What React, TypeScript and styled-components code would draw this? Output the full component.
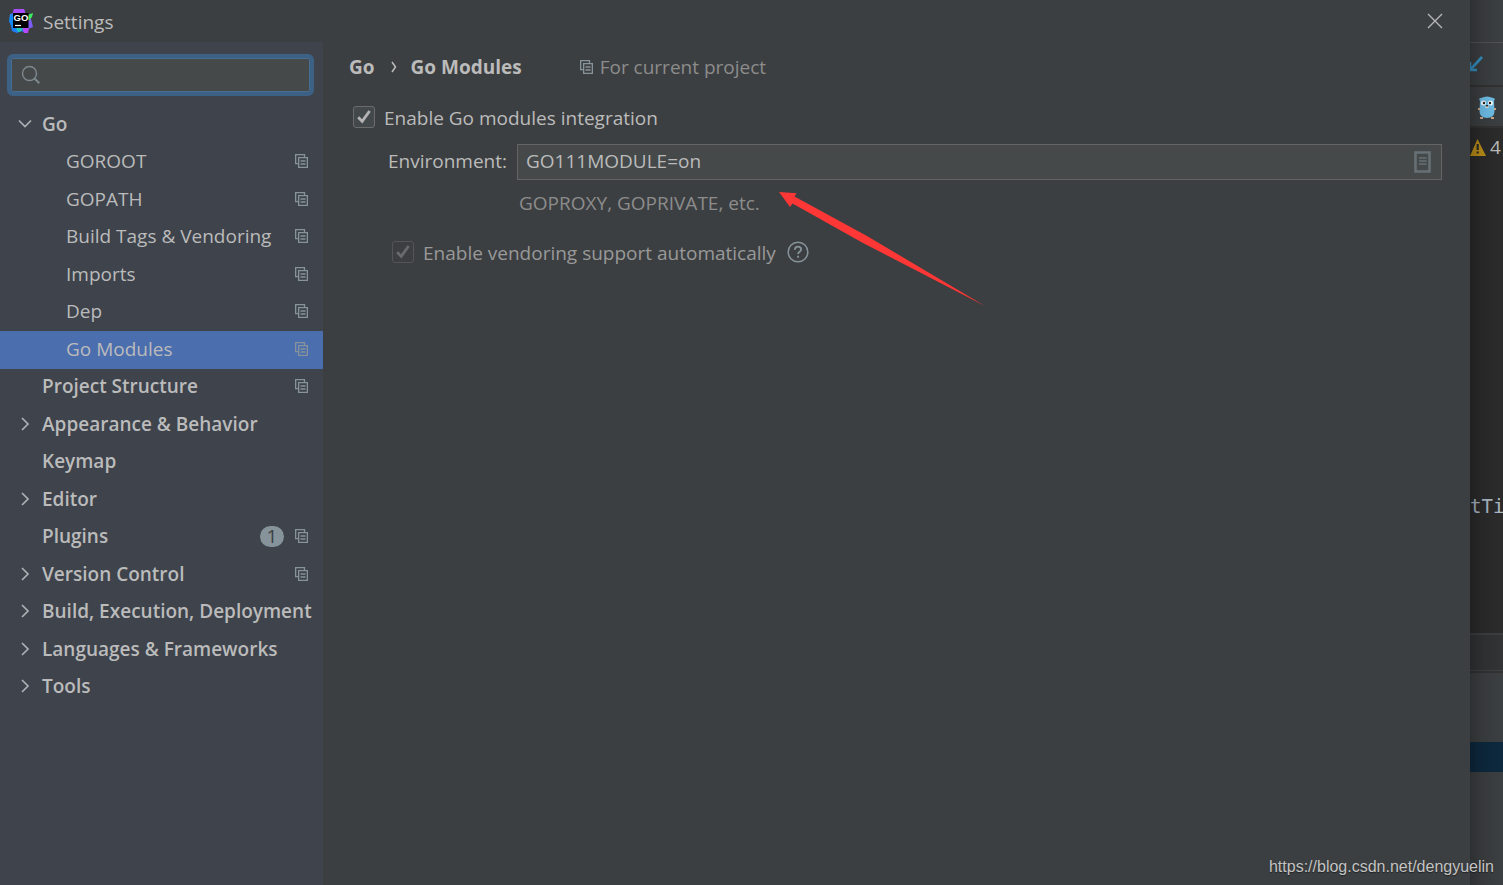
import React from 'react';
import styled, { createGlobalStyle, css } from 'styled-components';

const GlobalStyle = createGlobalStyle`
  * { box-sizing: border-box; }
  body {
    margin: 0;
    background: #3c3f41;
    color: #bbbbbb;
    font-family: "Open Sans", "Noto Sans", sans-serif;
    font-size: 19px;
    font-weight: 400;
    line-height: 26px;
  }
  input, button { font: inherit; color: inherit; }
`;

const Screen = styled.div`
  position: relative;
  display: flex;
  min-height: 100vh;
  overflow: hidden;
`;

const Dialog = styled.div`
  flex: 1;
  min-width: 0;
  display: flex;
  flex-direction: column;
  background: #3c3f41;
`;

const TitleBar = styled.header`
  display: flex;
  align-items: center;
  height: 42px;
  padding: 0 24px 0 8px;
  gap: 9px;
`;

const Title = styled.h1`
  flex: 1;
  margin: 0;
  padding-top: 1px;
  font-size: 19px;
  font-weight: inherit;
`;

const IconButton = styled.button`
  display: grid;
  place-items: center;
  flex: none;
  padding: 0;
  border: 0;
  background: none;
  cursor: pointer;
`;

const Body = styled.div`
  flex: 1;
  display: flex;
`;

const Sidebar = styled.aside`
  width: 323px;
  flex: none;
  padding-top: 12px;
  background: #3e434c;
`;

const SearchBox = styled.label`
  display: flex;
  align-items: center;
  gap: 8px;
  height: 42px;
  margin: 0 9px 10px 7px;
  padding: 0 10px;
  border: 4px solid #3d6185;
  border-radius: 6px;
  background: #45494a;
  box-shadow: inset 0 0 0 1px #466d94;
`;

const SearchInput = styled.input`
  flex: 1;
  min-width: 0;
  padding: 0 0 2px;
  border: 0;
  outline: 0;
  background: none;
`;

const Tree = styled.ul`
  display: grid;
  grid-template-columns: minmax(0, 1fr);
  grid-auto-rows: 1fr;
  min-height: 600px;
  margin: 0;
  padding: 0;
  list-style: none;
`;

const TreeRow = styled.li<{ $selected?: boolean }>`
  display: flex;
  align-items: center;
  padding: 0 14px 2px 18px;
  ${(p) => p.$selected && css`background: #4b6eaf;`}
`;

const Twisty = styled.span`
  display: grid;
  place-items: center;
  flex: none;
  width: 14px;
  margin-right: 10px;
`;

const TreeLink = styled.a<{ $child?: boolean }>`
  flex: 1;
  min-width: 0;
  color: inherit;
  text-decoration: none;
  white-space: nowrap;
  font-weight: ${(p) => (p.$child ? 400 : 600)};
  padding-left: ${(p) => (p.$child ? 24 : 0)}px;
`;

const CountBadge = styled.span`
  width: 24px;
  height: 21px;
  margin-right: 11px;
  border-radius: 11px;
  background: #87939a;
  color: #3c3f41;
  text-align: center;
  line-height: 21px;
`;

const Content = styled.main`
  position: relative;
  flex: 1;
  min-width: 0;
  padding: 12px 28px 0 26px;
`;

const Crumbs = styled.nav`
  display: flex;
  align-items: center;
  height: 26px;
`;

const CrumbLink = styled.a`
  color: inherit;
  font-weight: 700;
  text-decoration: none;
`;

const CrumbArrow = styled.svg`
  margin: 0 14px 0 16px;
`;

const Scope = styled.span`
  display: flex;
  align-items: center;
  gap: 6px;
  margin-left: 58px;
  color: #8c8c8c;
`;

const CheckRow = styled.div<{ $nested?: boolean }>`
  display: flex;
  align-items: center;
  gap: 9px;
  margin: ${(p) => (p.$nested ? '24px 0 0 43px' : '25px 0 0 4px')};
  color: ${(p) => (p.$nested ? '#999999' : 'inherit')};
`;

const CheckFrame = styled.span`
  display: grid;
  width: 22px;
  height: 22px;
  margin-bottom: 3px;
  & > * { grid-area: 1 / 1; }
`;

const CheckInput = styled.input`
  appearance: none;
  margin: 0;
  border: 1px solid #6b6b6b;
  border-radius: 3px;
  background: #43494a;
  &:disabled { border-color: #545556; background: #3c3f41; }
`;

const CheckMark = styled.svg`
  pointer-events: none;
  place-self: center;
`;

const HelpButton = styled(IconButton)`
  margin: 0 0 2px 2px;
`;

const Field = styled.div`
  display: grid;
  grid-template-columns: 113px 1fr;
  column-gap: 16px;
  align-items: center;
  margin: 13px 0 0 39px;
`;

const FieldLabel = styled.label`
  padding-bottom: 2px;
  white-space: nowrap;
`;

const FieldBox = styled.div`
  display: flex;
  align-items: center;
  height: 36px;
  padding: 0 10px 0 8px;
  border: 1px solid #646464;
  background: #45494a;
`;

const Hint = styled.p`
  grid-column: 2;
  margin: 10px 0 0 2px;
  color: #8c8c8c;
`;

const Annotation = styled.svg`
  position: absolute;
  left: 456px;
  top: 150px;
  pointer-events: none;
`;

const Behind = styled.aside`
  position: relative;
  display: flex;
  flex-direction: column;
  width: 33px;
  flex: none;
  overflow: hidden;
  &::after {
    content: "";
    position: absolute;
    inset: 0;
    background: linear-gradient(to right, rgba(0, 0, 0, 0.25), rgba(0, 0, 0, 0.1) 12px, rgba(0, 0, 0, 0) 30px);
  }
`;

const Band = styled.div<{ $h?: number; $bg?: string; $line?: string; $thin?: boolean }>`
  display: flex;
  align-items: center;
  flex: ${(p) => (p.$h ? 'none' : 1)};
  height: ${(p) => (p.$h ? `${p.$h}px` : 'auto')};
  background: ${(p) => p.$bg || '#3c3f41'};
  border-bottom: ${(p) => (p.$line ? `${p.$thin ? 1 : 2}px solid ${p.$line}` : '0')};
`;

const Editor = styled(Band)`
  flex-direction: column;
  align-items: stretch;
`;

const Warnings = styled.span`
  display: flex;
  align-items: center;
  gap: 4px;
  margin-top: 6px;
`;

const Code = styled.code`
  margin-top: 333px;
  color: #a9b7c6;
  font-family: "DejaVu Sans Mono", monospace;
  font-size: 19px;
  line-height: 26px;
`;

const Watermark = styled.span`
  position: absolute;
  right: 9px;
  bottom: 8px;
  color: #c4c4c4;
  font-family: "Liberation Sans", Arial, sans-serif;
  font-size: 16px;
  line-height: 20px;
  text-shadow: 0 1px 1px rgba(0, 0, 0, 0.5);
`;

const CopyIcon = () => (
  <svg width="14" height="14" viewBox="0 0 14 14" fill="none" stroke="#87939a" strokeWidth="1.3" aria-hidden="true">
    <path d="M3.5 9.600H.65V.65h8.850v2.800" />
    <path d="M3.650 3.650h8.700v9.700H3.650zM5.500 7h5M5.500 10h5" />
  </svg>
);

const Chevron = ({ open }: { open?: boolean }) => (
  <svg width="14" height="14" viewBox="0 0 14 14" fill="none" stroke="#adb0b3" strokeWidth="1.7" aria-hidden="true">
    <path d={open ? 'M1 3.5l6 6 6-6' : 'M4 1l6 6-6 6'} />
  </svg>
);

const Tick = ({ color }: { color: string }) => (
  <CheckMark width="14" height="14" viewBox="0 0 14 14" fill="none" stroke={color} strokeWidth="2.8" aria-hidden="true">
    <path d="M1.2 7.2l4 4.200L12.600 1" />
  </CheckMark>
);

const Logo = () => (
  <svg width="26" height="26" viewBox="0 0 26 26" aria-hidden="true">
    <defs>
      <linearGradient id="edge" x1="0" y1="0" x2="0" y2="1">
        <stop offset="0" stopColor="#7a5cff" />
        <stop offset="0.35" stopColor="#0b8cf5" />
        <stop offset="1" stopColor="#1f7dff" />
      </linearGradient>
    </defs>
    <path d="M6 1h10l1 4 3 1v15l-2 4-5-2-4 2-5-2-1-5-2-5 1-7 3-1z" fill="url(#edge)" />
    <path d="M6 1h10l1.500 4.500H4.500z" fill="#a94df7" />
    <path d="M20 8l3 3 2 8-5 2z" fill="#7d5cf5" />
    <path d="M14 20h7l-1 5h-4z" fill="#b74af7" />
    <path d="M8 20h7l-2 3.500-3 .5z" fill="#21c6b0" />
    <path d="M19 7l6-2-1 4-3 3.500-2-1z" fill="#3bea62" />
    <path d="M5 5h15.500v15H5z" fill="#000" />
    <path d="M7 17.500h6" stroke="#fff" strokeWidth="1.2" />
    <text x="5.500" y="12.500" fill="#fff" fontFamily="Liberation Sans, sans-serif" fontWeight="700" fontSize="9.500">GO</text>
  </svg>
);

type Item = { label: string; child?: boolean; open?: boolean; group?: boolean; copy?: boolean; count?: number; selected?: boolean };

const items: Item[] = [
  { label: 'Go', group: true, open: true },
  { label: 'GOROOT', child: true, copy: true },
  { label: 'GOPATH', child: true, copy: true },
  { label: 'Build Tags & Vendoring', child: true, copy: true },
  { label: 'Imports', child: true, copy: true },
  { label: 'Dep', child: true, copy: true },
  { label: 'Go Modules', child: true, copy: true, selected: true },
  { label: 'Project Structure', copy: true },
  { label: 'Appearance & Behavior', group: true },
  { label: 'Keymap' },
  { label: 'Editor', group: true },
  { label: 'Plugins', copy: true, count: 1 },
  { label: 'Version Control', group: true, copy: true },
  { label: 'Build, Execution, Deployment', group: true },
  { label: 'Languages & Frameworks', group: true },
  { label: 'Tools', group: true },
];

export default function App() {
  return (
    <Screen>
      <GlobalStyle />
      <Dialog role="dialog" aria-labelledby="title">
        <TitleBar>
          <Logo />
          <Title id="title">Settings</Title>
          <IconButton aria-label="Close">
            <svg width="22" height="22" viewBox="0 0 22 22" stroke="#b4b6b7" strokeWidth="1.4">
              <path d="M4 4l14 14M18 4L4 18" />
            </svg>
          </IconButton>
        </TitleBar>
        <Body>
          <Sidebar>
            <SearchBox>
              <svg width="20" height="20" viewBox="0 0 20 20" fill="none" stroke="#7e888e" aria-hidden="true">
                <circle cx="8.5" cy="8.5" r="7" strokeWidth="1.4" />
                <path d="M13.3 13.3l5 5" strokeWidth="2" />
              </svg>
              <SearchInput type="text" aria-label="Search settings" />
            </SearchBox>
            <Tree>
              {items.map((it) => (
                <TreeRow key={it.label} $selected={it.selected}>
                  <Twisty>{it.group && <Chevron open={it.open} />}</Twisty>
                  <TreeLink href="#" $child={it.child}>{it.label}</TreeLink>
                  {it.count && <CountBadge>{it.count}</CountBadge>}
                  {it.copy && <CopyIcon />}
                </TreeRow>
              ))}
            </Tree>
          </Sidebar>
          <Content>
            <Crumbs>
              <CrumbLink href="#">Go</CrumbLink>
              <CrumbArrow width="6" height="12" viewBox="0 0 6 12" fill="none" stroke="#bbbbbb" strokeWidth="1.5">
                <path d="M1 1l3.5 5L1 11" />
              </CrumbArrow>
              <CrumbLink href="#">Go Modules</CrumbLink>
              <Scope><CopyIcon />For current project</Scope>
            </Crumbs>
            <CheckRow>
              <CheckFrame>
                <CheckInput id="modules" type="checkbox" defaultChecked />
                <Tick color="#b4b4b4" />
              </CheckFrame>
              <label htmlFor="modules">Enable Go modules integration</label>
            </CheckRow>
            <Field>
              <FieldLabel htmlFor="env">Environment:</FieldLabel>
              <FieldBox>
                <SearchInput id="env" type="text" defaultValue="GO111MODULE=on" />
                <IconButton aria-label="Edit environment variables">
                  <svg width="17" height="22" viewBox="0 0 17 22" fill="none" stroke="#667075">
                    <path d="M1.5 1.5h14v19h-14z" strokeWidth="2.6" />
                    <path d="M5 7h7.500M5 10h7.500M5 13h7.500" strokeWidth="1.3" />
                  </svg>
                </IconButton>
              </FieldBox>
              <Hint>GOPROXY, GOPRIVATE, etc.</Hint>
            </Field>
            <CheckRow $nested>
              <CheckFrame>
                <CheckInput id="vendoring" type="checkbox" defaultChecked disabled />
                <Tick color="#686a6b" />
              </CheckFrame>
              <label htmlFor="vendoring">Enable vendoring support automatically</label>
              <HelpButton aria-label="Help">
                <svg width="22" height="22" viewBox="0 0 22 22" fill="none" stroke="#87939a">
                  <circle cx="11" cy="11" r="9.800" strokeWidth="1.5" />
                  <path d="M7.900 8.700c0-2 1.300-3 3.100-3s3.100 1.100 3.100 2.700c0 2.200-3 2.400-3 4.600M11.100 14.800v2" strokeWidth="1.8" />
                </svg>
              </HelpButton>
            </CheckRow>
            <Annotation width="206" height="116" viewBox="0 0 206 116" aria-hidden="true">
              <path d="M0 0l17.500 1.200-2 3.200L88 44 206 114 84 51 13.500 11.500 11 15z" fill="#fd3735" />
            </Annotation>
          </Content>
        </Body>
      </Dialog>
      <Behind>
        <Band $h={43} $line="#515354" $thin />
        <Band $h={44} $line="#323232">
          <svg width="14" height="18" viewBox="0 0 14 18" fill="none" stroke="#3592c4" strokeWidth="2.600">
            <path d="M12 2L1 14M0 7v8h7" />
          </svg>
        </Band>
        <Band $h={41} $line="#323232">
          <svg width="33" height="26" viewBox="0 -2 33 26">
            <path d="M10 5q-2-3 1-3 6-3 12 0 3 0 1 3l.5 10q0 7-7.500 7t-7.500-7z" fill="#6fbfe9" />
            <circle cx="13.500" cy="7" r="2.500" fill="#fff" />
            <circle cx="20.500" cy="7" r="2.500" fill="#fff" />
            <circle cx="14" cy="7" r="1.200" fill="#222" />
            <circle cx="20" cy="7" r="1.200" fill="#222" />
            <path d="M15.500 10h3v2h-3z" fill="#e8e0d8" />
            <path d="M16 9h2v1.500h-2z" fill="#333" />
            <path d="M8 12h2v2H8zM24 12h2v2h-2zM10 21h3v2h-3zM21 21h3v2h-3z" fill="#c9a58a" />
          </svg>
        </Band>
        <Editor $bg="#2b2b2b">
          <Warnings>
            <svg width="16" height="17" viewBox="0 0 16 17">
              <path d="M7.500 0L16 17H0z" fill="#be9117" />
              <path d="M7.700 5v6M7.700 12.500v2" stroke="#2b2b2b" strokeWidth="2.200" />
            </svg>
            4
          </Warnings>
          <Code>tTi</Code>
        </Editor>
        <Band $h={2} />
        <Band $h={36} $bg="#313335" $line="#3f4244" $thin />
        <Band $h={2} $bg="#323232" />
        <Band $h={69} />
        <Band $h={30} $bg="#0d293e" />
        <Band $h={113} />
      </Behind>
      <Watermark>https://blog.csdn.net/dengyuelin</Watermark>
    </Screen>
  );
}
